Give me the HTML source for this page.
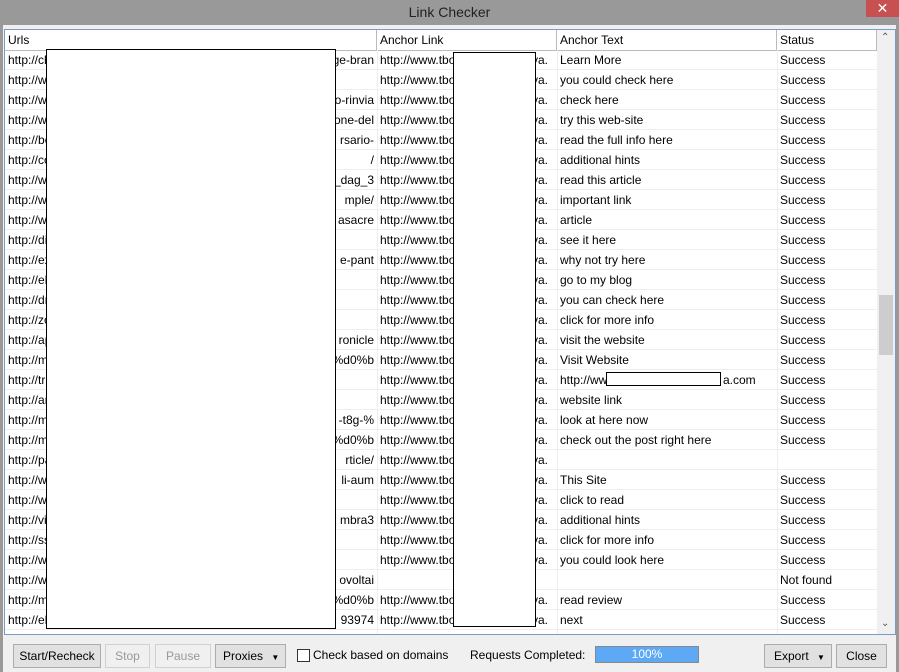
<!DOCTYPE html>
<html><head><meta charset="utf-8"><style>
*{margin:0;padding:0;box-sizing:border-box}
body{width:899px;height:672px;background:#f0f0f0;font-family:"Liberation Sans",sans-serif;font-size:12px;color:#000;position:relative;overflow:hidden}
.title{position:absolute;left:0;top:0;width:899px;height:25px;background:#999;color:#222;font-size:14px;text-align:center;line-height:24px}
.x{position:absolute;right:0;top:0;width:33px;height:17px;background:#c75050;color:#fff;font-size:14px;line-height:16px;text-align:center}
.lb{position:absolute;left:0;top:25px;width:3px;height:647px;background:#999}
.rb{position:absolute;right:0;top:25px;width:3px;height:647px;background:#999}
.tbl{position:absolute;left:4px;top:29px;width:892px;height:606px;border:1px solid #7a9cc4;background:#fff;overflow:hidden}
.hd{position:absolute;left:0;top:0;height:21px;width:872px;border-bottom:1px solid #bbb;background:#fff}
.hd div{position:absolute;top:0;height:20px;border-right:1px solid #bbb;padding-left:3px;line-height:20px}
.r{position:absolute;left:0;width:872px;height:20px;border-bottom:1px solid #eee}
.r span{position:absolute;top:1px;line-height:19px;white-space:nowrap}
.c{position:absolute;top:0;height:20px;width:1px;background:#eee}
.sb{position:absolute;left:872px;top:0;width:18px;height:605px;background:#f0f0f0}
.btn{position:absolute;top:644px;height:24px;border:1px solid #adadad;background:#e1e1e1;line-height:22px;text-align:center;font-size:12px}
.dis{color:#999;border-color:#d0d0d0;background:#f0f0f0}
.box{position:absolute;background:#fff;border:1px solid #000}
</style></head><body>
<div class="title">Link Checker</div><div class="x">✕</div>
<div class="lb"></div><div class="rb"></div>
<div class="tbl">
<div class="hd"><div style="left:0;width:372px">Urls</div><div style="left:372px;width:180px">Anchor Link</div><div style="left:552px;width:220px">Anchor Text</div><div style="left:772px;width:100px">Status</div></div>
<div id="rows">
<div class="r" style="top:20px"><span style="left:3px">http://ch</span><span style="right:503px">ge-bran</span><span style="left:375px">http://www.tbo</span><span style="left:527px">ya.</span><span style="left:555px">Learn More</span><span style="left:775px">Success</span></div>
<div class="r" style="top:40px"><span style="left:3px">http://w</span><span style="left:375px">http://www.tbo</span><span style="left:527px">ya.</span><span style="left:555px">you could check here</span><span style="left:775px">Success</span></div>
<div class="r" style="top:60px"><span style="left:3px">http://w</span><span style="right:503px">o-rinvia</span><span style="left:375px">http://www.tbo</span><span style="left:527px">ya.</span><span style="left:555px">check here</span><span style="left:775px">Success</span></div>
<div class="r" style="top:80px"><span style="left:3px">http://w</span><span style="right:503px">one-del</span><span style="left:375px">http://www.tbo</span><span style="left:527px">ya.</span><span style="left:555px">try this web-site</span><span style="left:775px">Success</span></div>
<div class="r" style="top:100px"><span style="left:3px">http://bo</span><span style="right:503px">rsario-</span><span style="left:375px">http://www.tbo</span><span style="left:527px">ya.</span><span style="left:555px">read the full info here</span><span style="left:775px">Success</span></div>
<div class="r" style="top:120px"><span style="left:3px">http://co</span><span style="right:503px">/</span><span style="left:375px">http://www.tbo</span><span style="left:527px">ya.</span><span style="left:555px">additional hints</span><span style="left:775px">Success</span></div>
<div class="r" style="top:140px"><span style="left:3px">http://w</span><span style="right:503px">_dag_3</span><span style="left:375px">http://www.tbo</span><span style="left:527px">ya.</span><span style="left:555px">read this article</span><span style="left:775px">Success</span></div>
<div class="r" style="top:160px"><span style="left:3px">http://w</span><span style="right:503px">mple/</span><span style="left:375px">http://www.tbo</span><span style="left:527px">ya.</span><span style="left:555px">important link</span><span style="left:775px">Success</span></div>
<div class="r" style="top:180px"><span style="left:3px">http://w</span><span style="right:503px">asacre</span><span style="left:375px">http://www.tbo</span><span style="left:527px">ya.</span><span style="left:555px">article</span><span style="left:775px">Success</span></div>
<div class="r" style="top:200px"><span style="left:3px">http://di</span><span style="left:375px">http://www.tbo</span><span style="left:527px">ya.</span><span style="left:555px">see it here</span><span style="left:775px">Success</span></div>
<div class="r" style="top:220px"><span style="left:3px">http://ex</span><span style="right:503px">e-pant</span><span style="left:375px">http://www.tbo</span><span style="left:527px">ya.</span><span style="left:555px">why not try here</span><span style="left:775px">Success</span></div>
<div class="r" style="top:240px"><span style="left:3px">http://el</span><span style="left:375px">http://www.tbo</span><span style="left:527px">ya.</span><span style="left:555px">go to my blog</span><span style="left:775px">Success</span></div>
<div class="r" style="top:260px"><span style="left:3px">http://dr</span><span style="left:375px">http://www.tbo</span><span style="left:527px">ya.</span><span style="left:555px">you can check here</span><span style="left:775px">Success</span></div>
<div class="r" style="top:280px"><span style="left:3px">http://zo</span><span style="left:375px">http://www.tbo</span><span style="left:527px">ya.</span><span style="left:555px">click for more info</span><span style="left:775px">Success</span></div>
<div class="r" style="top:300px"><span style="left:3px">http://ap</span><span style="right:503px">ronicle</span><span style="left:375px">http://www.tbo</span><span style="left:527px">ya.</span><span style="left:555px">visit the website</span><span style="left:775px">Success</span></div>
<div class="r" style="top:320px"><span style="left:3px">http://m</span><span style="right:503px">%d0%b</span><span style="left:375px">http://www.tbo</span><span style="left:527px">ya.</span><span style="left:555px">Visit Website</span><span style="left:775px">Success</span></div>
<div class="r" style="top:340px"><span style="left:3px">http://tr</span><span style="left:375px">http://www.tbo</span><span style="left:527px">ya.</span><span style="left:555px">http://ww</span><span style="left:718px">a.com</span><span style="left:775px">Success</span></div>
<div class="r" style="top:360px"><span style="left:3px">http://ar</span><span style="left:375px">http://www.tbo</span><span style="left:527px">ya.</span><span style="left:555px">website link</span><span style="left:775px">Success</span></div>
<div class="r" style="top:380px"><span style="left:3px">http://m</span><span style="right:503px">-t8g-%</span><span style="left:375px">http://www.tbo</span><span style="left:527px">ya.</span><span style="left:555px">look at here now</span><span style="left:775px">Success</span></div>
<div class="r" style="top:400px"><span style="left:3px">http://m</span><span style="right:503px">%d0%b</span><span style="left:375px">http://www.tbo</span><span style="left:527px">ya.</span><span style="left:555px">check out the post right here</span><span style="left:775px">Success</span></div>
<div class="r" style="top:420px"><span style="left:3px">http://pa</span><span style="right:503px">rticle/</span><span style="left:375px">http://www.tbo</span><span style="left:527px">ya.</span></div>
<div class="r" style="top:440px"><span style="left:3px">http://w</span><span style="right:503px">li-aum</span><span style="left:375px">http://www.tbo</span><span style="left:527px">ya.</span><span style="left:555px">This Site</span><span style="left:775px">Success</span></div>
<div class="r" style="top:460px"><span style="left:3px">http://w</span><span style="left:375px">http://www.tbo</span><span style="left:527px">ya.</span><span style="left:555px">click to read</span><span style="left:775px">Success</span></div>
<div class="r" style="top:480px"><span style="left:3px">http://vi</span><span style="right:503px">mbra3</span><span style="left:375px">http://www.tbo</span><span style="left:527px">ya.</span><span style="left:555px">additional hints</span><span style="left:775px">Success</span></div>
<div class="r" style="top:500px"><span style="left:3px">http://ss</span><span style="left:375px">http://www.tbo</span><span style="left:527px">ya.</span><span style="left:555px">click for more info</span><span style="left:775px">Success</span></div>
<div class="r" style="top:520px"><span style="left:3px">http://w</span><span style="left:375px">http://www.tbo</span><span style="left:527px">ya.</span><span style="left:555px">you could look here</span><span style="left:775px">Success</span></div>
<div class="r" style="top:540px"><span style="left:3px">http://w</span><span style="right:503px">ovoltai</span><span style="left:775px">Not found</span></div>
<div class="r" style="top:560px"><span style="left:3px">http://m</span><span style="right:503px">%d0%b</span><span style="left:375px">http://www.tbo</span><span style="left:527px">ya.</span><span style="left:555px">read review</span><span style="left:775px">Success</span></div>
<div class="r" style="top:580px"><span style="left:3px">http://el</span><span style="right:503px">93974</span><span style="left:375px">http://www.tbo</span><span style="left:527px">ya.</span><span style="left:555px">next</span><span style="left:775px">Success</span></div>
</div>
<div class="c" style="left:372px;top:20px;height:585px;position:absolute"></div>
<div class="c" style="left:552px;top:20px;height:585px;position:absolute"></div>
<div class="c" style="left:772px;top:20px;height:585px;position:absolute"></div>
<div class="sb"><div style="position:absolute;left:4px;top:2px;font-size:10px;color:#555">&#8963;</div><div style="position:absolute;left:2px;top:265px;width:14px;height:60px;background:#cdcdcd"></div><div style="position:absolute;left:4px;top:588px;font-size:10px;color:#555">&#8964;</div></div>
</div>
<div class="box" style="left:46px;top:49px;width:290px;height:580px"></div>
<div class="box" style="left:453px;top:52px;width:83px;height:575px"></div>
<div class="box" style="left:606px;top:372px;width:115px;height:14px"></div>
<div class="btn" style="left:13px;width:88px">Start/Recheck</div>
<div class="btn dis" style="left:105px;width:45px">Stop</div>
<div class="btn dis" style="left:155px;width:56px">Pause</div>
<div class="btn" style="left:215px;width:71px;text-align:left;padding-left:7px">Proxies <span style="font-size:8px;margin-left:5px">▼</span></div>
<div style="position:absolute;left:297px;top:649px;width:13px;height:13px;border:1px solid #333;background:#fff"></div>
<div style="position:absolute;left:313px;top:648px">Check based on domains</div>
<div style="position:absolute;left:470px;top:648px">Requests Completed:</div>
<div style="position:absolute;left:595px;top:646px;width:104px;height:17px;background:#5da9f6;border:1px solid #888;color:#fff;text-align:center;line-height:15px">100%</div>
<div class="btn" style="left:764px;width:68px;text-align:left;padding-left:9px">Export <span style="font-size:8px;margin-left:5px">▼</span></div>
<div class="btn" style="left:836px;width:51px">Close</div>
</body></html>
